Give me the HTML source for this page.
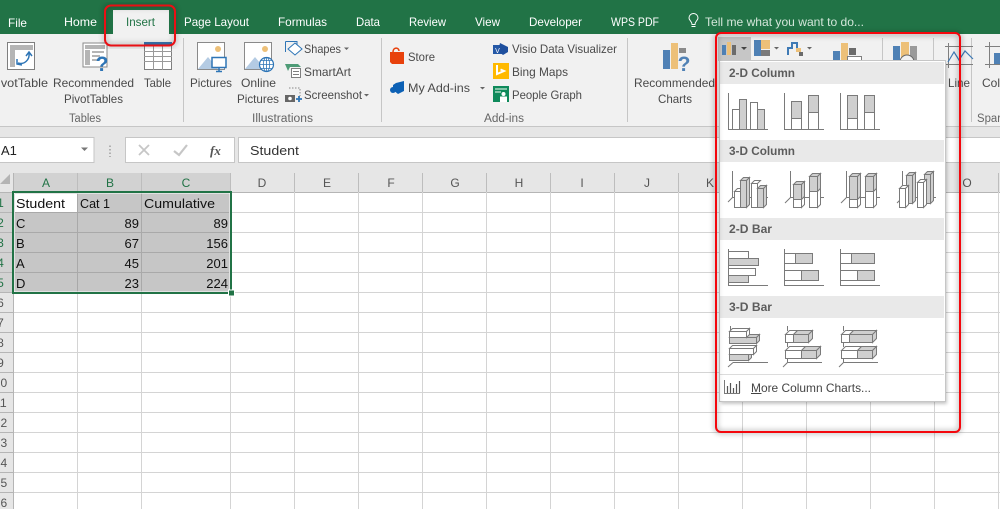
<!DOCTYPE html>
<html><head><meta charset="utf-8"><style>
html,body{margin:0;padding:0;background:#fff;width:1000px;height:509px;overflow:hidden}
svg{display:block;font-family:"Liberation Sans",sans-serif}
.t{font-size:12px;fill:#4a4a4a}
.gl{font-size:11.500px;fill:#666}
.w{font-size:12px;fill:#fff}
.c{font-size:13px;fill:#111}
.h{font-size:12px;fill:#555}
.g{font-size:12px;fill:#217346}
.s{font-size:12px;font-weight:bold;fill:#5c5c5c}
.i{fill:#fff;stroke:#7a7a7a;stroke-width:1}
.d{fill:#cfcfcf;stroke:#7a7a7a;stroke-width:1}
.l{fill:none;stroke:#7a7a7a;stroke-width:1}
</style></head><body>
<svg width="1000" height="509" viewBox="0 0 1000 509" xmlns="http://www.w3.org/2000/svg">
<defs>
<filter id="sh" x="-10%" y="-10%" width="120%" height="120%"><feGaussianBlur stdDeviation="3"/></filter>
<filter id="ps" x="-10%" y="-10%" width="120%" height="120%"><feGaussianBlur stdDeviation="1.500"/></filter>
</defs>
<rect width="1000" height="509" fill="#fff"/>

<!-- title and tabs -->
<rect width="1000" height="34" fill="#217346"/>
<rect x="0" y="34" width="1000" height="92" fill="#f1f1f1"/>
<rect x="113" y="10" width="56" height="24" fill="#f1f1f1"/>
<text x="8" y="27" class="w" textLength="19" lengthAdjust="spacingAndGlyphs">File</text>
<text x="64" y="26" class="w" textLength="33" lengthAdjust="spacingAndGlyphs">Home</text>
<text x="126" y="26" font-size="12" fill="#217346" textLength="29" lengthAdjust="spacingAndGlyphs">Insert</text>
<text x="184" y="26" class="w" textLength="65" lengthAdjust="spacingAndGlyphs">Page Layout</text>
<text x="278" y="26" class="w" textLength="49" lengthAdjust="spacingAndGlyphs">Formulas</text>
<text x="356" y="26" class="w" textLength="24" lengthAdjust="spacingAndGlyphs">Data</text>
<text x="409" y="26" class="w" textLength="37" lengthAdjust="spacingAndGlyphs">Review</text>
<text x="475" y="26" class="w" textLength="25" lengthAdjust="spacingAndGlyphs">View</text>
<text x="529" y="26" class="w" textLength="53" lengthAdjust="spacingAndGlyphs">Developer</text>
<text x="611" y="26" class="w" textLength="48" lengthAdjust="spacingAndGlyphs">WPS PDF</text>
<path d="M692 24.500C692 21 689 20.500 689 18A4.500 4.500 0 0 1 698 18C698 20.500 695 21 695 24.500ZM691.500 26.500H695.500" fill="none" stroke="#fff" stroke-width="1"/>
<text x="705" y="26" font-size="12" fill="#d3e6da" textLength="159" lengthAdjust="spacingAndGlyphs">Tell me what you want to do...</text>

<!-- ribbon dividers -->
<path d="M183.500 38V122M381.500 38V122M627.500 38V122M882.500 38V122M933.500 38V122M971.500 38V122" stroke="#c6c6c6" stroke-width="1"/>
<path d="M0 126.500H1000" stroke="#c6c6c6"/>

<!-- PivotTable -->
<rect x="7.500" y="42.500" width="27" height="27" fill="#fff" stroke="#7f7f7f"/>
<rect x="10" y="45" width="23" height="5" fill="#b5b5b5"/><rect x="10" y="50" width="5" height="17" fill="#b5b5b5"/>
<path d="M18 63C24 65 30 60 29 53M26 56L29 52L32 56M17 59L17 64L22 65" fill="none" stroke="#2e75b6" stroke-width="1.500"/>
<text x="-2" y="87" class="t" textLength="50" lengthAdjust="spacingAndGlyphs">ivotTable</text>
<!-- Recommended PivotTables -->
<rect x="83" y="43" width="24" height="24" fill="#fff" stroke="#8a8a8a"/>
<rect x="85" y="45" width="20" height="4" fill="#b5b5b5"/><rect x="85" y="50" width="5" height="15" fill="#b5b5b5"/><path d="M92 52H104M92 56H100M92 60H98" stroke="#b5b5b5" stroke-width="2"/>
<text x="102" y="71" font-size="21" font-weight="bold" fill="#2e75b6" text-anchor="middle">?</text>
<text x="53" y="87" class="t" textLength="81" lengthAdjust="spacingAndGlyphs">Recommended</text>
<text x="64" y="103" class="t" textLength="59" lengthAdjust="spacingAndGlyphs">PivotTables</text>
<!-- Table -->
<rect x="144.500" y="42.500" width="27" height="27" fill="#fff" stroke="#7f7f7f"/>
<rect x="144" y="42" width="28" height="4" fill="#3b75b0"/>
<path d="M144 51.500H172M144 56.500H172M144 61.500H172M153.500 46V70M162.500 46V70" stroke="#9a9a9a"/>
<text x="144" y="87" class="t" textLength="27" lengthAdjust="spacingAndGlyphs">Table</text>
<text x="69" y="122" class="gl" textLength="32" lengthAdjust="spacingAndGlyphs">Tables</text>
<!-- Pictures -->
<rect x="197.500" y="42.500" width="27" height="27" fill="#fff" stroke="#8a8a8a"/>
<circle cx="218" cy="49" r="3" fill="#edc078"/>
<path d="M198 69L208 57L218 69Z" fill="#b4cbe3"/>
<rect x="212" y="57.500" width="14" height="10" fill="#fff" stroke="#2e75b6" stroke-width="1.500"/><path d="M216 71.500H222M219 68V71" stroke="#2e75b6" stroke-width="1.500"/>
<text x="190" y="87" class="t" textLength="42" lengthAdjust="spacingAndGlyphs">Pictures</text>
<!-- Online Pictures -->
<rect x="244.500" y="42.500" width="27" height="27" fill="#fff" stroke="#8a8a8a"/>
<circle cx="265" cy="49" r="3" fill="#edc078"/>
<path d="M245 69L255 57L265 69Z" fill="#b4cbe3"/>
<circle cx="266.500" cy="64.500" r="7" fill="#fff" stroke="#2e75b6" stroke-width="1.200"/><path d="M259.500 64.500H273.500M266.500 57.500V71.500M261 60.500H272M261 68.500H272" stroke="#2e75b6" stroke-width=".8"/><ellipse cx="266.500" cy="64.500" rx="3.200" ry="7" fill="none" stroke="#2e75b6" stroke-width=".8"/>
<text x="241" y="87" class="t" textLength="35" lengthAdjust="spacingAndGlyphs">Online</text>
<text x="237" y="103" class="t" textLength="42" lengthAdjust="spacingAndGlyphs">Pictures</text>
<!-- Shapes etc -->
<path d="M285.500 41.500H297V45M285.500 41.500V52" fill="none" stroke="#2e75b6"/>
<path d="M295 43L302 49L295 55L288 49Z" fill="#fff" stroke="#2e75b6"/>
<text x="304" y="53" class="t" textLength="37" lengthAdjust="spacingAndGlyphs">Shapes</text><path d="M344 47.500H349L346.500 50Z" fill="#666"/>
<path d="M285 64H298L301 67H290L288 71Z" fill="#4e9b76"/>
<rect x="291.500" y="68.500" width="9" height="9" fill="#fff" stroke="#7f7f7f"/><path d="M293 71.500H299M293 74.500H299" stroke="#7f7f7f"/>
<text x="304" y="76" class="t" textLength="47" lengthAdjust="spacingAndGlyphs">SmartArt</text>
<path d="M289 88H300V96" fill="none" stroke="#888" stroke-dasharray="1.500 1.500"/>
<rect x="285" y="95" width="10" height="7" fill="#666"/><circle cx="290" cy="98.500" r="1.800" fill="#fff"/>
<path d="M299 96V102M296 99H302" stroke="#2e75b6" stroke-width="1.800"/>
<text x="304" y="99" class="t" textLength="58" lengthAdjust="spacingAndGlyphs">Screenshot</text><path d="M364 94H369L366.500 96.500Z" fill="#666"/>
<text x="252" y="122" class="gl" textLength="61" lengthAdjust="spacingAndGlyphs">Illustrations</text>

<!-- Add-ins -->
<path d="M390 52H404V64H392L390 62Z" fill="#e8410c"/><path d="M393 52C393 47 399 47 399 51" fill="none" stroke="#e8410c" stroke-width="1.500"/>
<text x="408" y="61" class="t" textLength="27" lengthAdjust="spacingAndGlyphs">Store</text>
<path d="M396 83L404 81V91L398 94L393 90V85Z" fill="#0d61b5"/><circle cx="393" cy="90" r="3" fill="#0d61b5"/>
<text x="408" y="92" class="t" textLength="62" lengthAdjust="spacingAndGlyphs">My Add-ins</text><path d="M480 87H485L482.500 89.500Z" fill="#666"/>
<rect x="493" y="45" width="9" height="9" fill="#2458a6"/><path d="M500 43L508 47V52L503 55L498 51Z" fill="#1e4f9e"/>
<text x="497.500" y="53" font-size="7" fill="#fff" text-anchor="middle">V</text>
<text x="512" y="53" class="t" textLength="105" lengthAdjust="spacingAndGlyphs">Visio Data Visualizer</text>
<rect x="493" y="63" width="16" height="16" fill="#ffb900"/><path d="M497 65V74L504 71L500.500 69.500" fill="none" stroke="#fff" stroke-width="2"/>
<text x="512" y="76" class="t" textLength="56" lengthAdjust="spacingAndGlyphs">Bing Maps</text>
<rect x="493" y="86" width="16" height="16" fill="#0f8a5b"/><path d="M495 89H507M495 92H501" stroke="#a9d8c2" stroke-width="1.500"/><circle cx="503.500" cy="94" r="2" fill="#fff"/><rect x="500" y="96.500" width="7" height="5.500" fill="#fff"/>
<text x="512" y="99" class="t" textLength="70" lengthAdjust="spacingAndGlyphs">People Graph</text>
<text x="484" y="122" class="gl" textLength="40" lengthAdjust="spacingAndGlyphs">Add-ins</text>

<!-- Recommended Charts -->
<rect x="663" y="50" width="7" height="19" fill="#5081b5"/><rect x="671" y="43" width="7" height="26" fill="#edc078"/><rect x="679" y="48" width="7" height="5" fill="#8a8a8a"/>
<text x="684" y="71" font-size="21" font-weight="bold" fill="#5081b5" text-anchor="middle">?</text>
<text x="634" y="87" class="t" textLength="81" lengthAdjust="spacingAndGlyphs">Recommended</text>
<text x="658" y="103" class="t" textLength="34" lengthAdjust="spacingAndGlyphs">Charts</text>

<!-- chart toolbar -->
<rect x="718" y="37" width="33" height="24" fill="#c6c6c6"/>
<rect x="722" y="45" width="4" height="10" fill="#4f81b5"/><rect x="727" y="42" width="4" height="13" fill="#edc078"/><rect x="732" y="45" width="4" height="10" fill="#6b6b6b"/>
<path d="M741 47H747L744 50Z" fill="#444"/>
<rect x="754" y="40" width="7" height="16" fill="#4f81b5"/><rect x="761" y="40" width="9" height="9" fill="#edc078"/><rect x="761" y="50" width="9" height="6" fill="#7a7a7a"/>
<path d="M774 47H779L776.500 49.500Z" fill="#666"/>
<path d="M788 55V48H792V43H797V49" fill="none" stroke="#3f7ab5" stroke-width="2"/><rect x="796" y="48" width="5" height="4" fill="#edc078"/><rect x="799" y="52" width="4" height="4" fill="#6b6b6b"/>
<path d="M807 47H812L809.500 49.500Z" fill="#666"/>
<rect x="833" y="51" width="7" height="10" fill="#4f81b5"/><rect x="841" y="43" width="7" height="18" fill="#edc078"/><rect x="849" y="48" width="7" height="7" fill="#6b6b6b"/>
<rect x="847.500" y="56.500" width="14" height="5" fill="#fff" stroke="#7f7f7f"/>
<rect x="893" y="46" width="7" height="14" fill="#4f81b5"/><rect x="901" y="42" width="8" height="18" fill="#edc078"/><rect x="910" y="46" width="7" height="14" fill="#9a9a9a"/>
<circle cx="907" cy="62" r="7" fill="#f1f1f1" stroke="#666"/>
<!-- Line / column sparkline icons -->
<path d="M945 46.500H973M945 64.500H973M948.500 43V68" stroke="#7f7f7f" fill="none"/>
<path d="M948 62L954 52L959 60L965 51L973 59" fill="none" stroke="#3f7ab5" stroke-width="1.200"/>
<path d="M989.500 42V68M985 46.500H1000M985 64.500H1000" stroke="#7f7f7f" fill="none"/><rect x="994" y="53" width="6" height="11" fill="#4f81b5"/>
<text x="948" y="87" class="t" textLength="22" lengthAdjust="spacingAndGlyphs">Line</text>
<text x="982" y="87" class="t" textLength="18" lengthAdjust="spacingAndGlyphs">Col</text>
<text x="977" y="122" class="gl" textLength="24" lengthAdjust="spacingAndGlyphs">Spar</text>

<!-- formula bar -->
<rect x="0" y="127" width="1000" height="46" fill="#e6e6e6"/>
<rect x="-1" y="137.500" width="95" height="25" fill="#fff" stroke="#c6c6c6"/>
<text x="1" y="155" font-size="13" fill="#222">A1</text>
<path d="M81 147.500H88L84.500 151Z" fill="#777"/>
<path d="M110 145.500V157" stroke="#b0b0b0" stroke-dasharray="1.500 2" stroke-width="2"/>
<rect x="125.500" y="137.500" width="109" height="25" fill="#fff" stroke="#c6c6c6"/>
<path d="M139 145L149 155M149 145L139 155" stroke="#c6c6c6" stroke-width="1.800"/>
<path d="M174 151L179 155L187 145" fill="none" stroke="#c6c6c6" stroke-width="2.200"/>
<text x="210" y="155" font-family="Liberation Serif" font-style="italic" font-size="13" fill="#555" font-weight="bold">fx</text>
<rect x="238.500" y="137.500" width="770" height="25" fill="#fff" stroke="#c6c6c6"/>
<text x="250" y="155" font-size="13" fill="#333" textLength="49" lengthAdjust="spacingAndGlyphs">Student</text>

<!-- headers -->
<rect x="0" y="173" width="1000" height="19" fill="#e6e6e6"/>
<rect x="0" y="192" width="13" height="317" fill="#e6e6e6"/>
<path d="M0 184L10 184L10 174Z" fill="#b4b4b4"/>
<rect x="14" y="173" width="217" height="19" fill="#d2d2d2"/>
<rect x="0" y="193" width="13" height="100" fill="#d2d2d2"/>
<path d="M13.500 173V509" stroke="#b5b5b5"/>
<path d="M0 192.500H1000" stroke="#b5b5b5"/>
<path d="M77.500 173V192M141.500 173V192M230.500 173V192M294.500 173V192M358.500 173V192M422.500 173V192M486.500 173V192M550.500 173V192M614.500 173V192M678.500 173V192M742.500 173V192M806.500 173V192M870.500 173V192M934.500 173V192M998.500 173V192" stroke="#bdbdbd"/>
<g text-anchor="middle" font-size="12">
<text x="46" y="187" class="g">A</text><text x="110" y="187" class="g">B</text><text x="186" y="187" class="g">C</text>
<text x="262" y="187" class="h">D</text><text x="327" y="187" class="h">E</text><text x="391" y="187" class="h">F</text><text x="455" y="187" class="h">G</text><text x="519" y="187" class="h">H</text><text x="582" y="187" class="h">I</text><text x="647" y="187" class="h">J</text><text x="710" y="187" class="h">K</text><text x="967" y="187" class="h">O</text>
<text x=".5" y="207" class="g">1</text><text x=".5" y="227" class="g">2</text><text x=".5" y="247" class="g">3</text><text x=".5" y="267" class="g">4</text><text x=".5" y="287" class="g">5</text>
<text x=".5" y="307" class="h">6</text><text x=".5" y="327" class="h">7</text><text x=".5" y="347" class="h">8</text><text x=".5" y="367" class="h">9</text><text x=".5" y="387" class="h">10</text><text x=".5" y="407" class="h">11</text><text x=".5" y="427" class="h">12</text><text x=".5" y="447" class="h">13</text><text x=".5" y="467" class="h">14</text><text x=".5" y="487" class="h">15</text><text x=".5" y="507" class="h">16</text>
</g>
<path d="M0 212.500H13M0 232.500H13M0 252.500H13M0 272.500H13M0 292.500H13M0 312.500H13M0 332.500H13M0 352.500H13M0 372.500H13M0 392.500H13M0 412.500H13M0 432.500H13M0 452.500H13M0 472.500H13M0 492.500H13" stroke="#b5b5b5"/>

<!-- grid -->
<path d="M14 212.500H1000M14 232.500H1000M14 252.500H1000M14 272.500H1000M14 292.500H1000M14 312.500H1000M14 332.500H1000M14 352.500H1000M14 372.500H1000M14 392.500H1000M14 412.500H1000M14 432.500H1000M14 452.500H1000M14 472.500H1000M14 492.500H1000M77.500 192V509M141.500 192V509M230.500 192V509M294.500 192V509M358.500 192V509M422.500 192V509M486.500 192V509M550.500 192V509M614.500 192V509M678.500 192V509M742.500 192V509M806.500 192V509M870.500 192V509M934.500 192V509M998.500 192V509" stroke="#d4d4d4"/>

<!-- selection -->
<rect x="14" y="193" width="216" height="99" fill="#c6c6c6"/>
<rect x="15" y="194" width="62" height="18" fill="#fff"/>
<path d="M15 212.500H229M15 232.500H229M15 252.500H229M15 272.500H229M77.500 193V292M141.500 193V292" stroke="#a9a9a9"/>
<rect x="14" y="193" width="216" height="99" fill="none" stroke="#fff"/>
<rect x="13" y="192" width="218" height="101" fill="none" stroke="#217346" stroke-width="2"/>
<rect x="228.500" y="290" width="6" height="6" fill="#217346" stroke="#fff" stroke-width="1"/>
<text x="16" y="208" class="c" textLength="49" lengthAdjust="spacingAndGlyphs">Student</text>
<text x="80" y="208" class="c" textLength="30" lengthAdjust="spacingAndGlyphs">Cat 1</text>
<text x="144" y="208" class="c" textLength="71" lengthAdjust="spacingAndGlyphs">Cumulative</text>
<text x="16" y="228" class="c">C</text><text x="16" y="248" class="c">B</text><text x="16" y="268" class="c">A</text><text x="16" y="288" class="c">D</text>
<g text-anchor="end">
<text x="139" y="228" class="c">89</text><text x="139" y="248" class="c">67</text><text x="139" y="268" class="c">45</text><text x="139" y="288" class="c">23</text>
<text x="228" y="228" class="c">89</text><text x="228" y="248" class="c">156</text><text x="228" y="268" class="c">201</text><text x="228" y="288" class="c">224</text>
</g>

<!-- dropdown panel -->
<rect x="721" y="63" width="226" height="341" fill="#000" opacity=".22" filter="url(#ps)"/>
<rect x="719.500" y="60.500" width="226" height="341" fill="#fff" stroke="#c6c6c6"/>
<rect x="720" y="62" width="224" height="22" fill="#e9e9e9"/>
<rect x="720" y="140" width="224" height="22" fill="#e9e9e9"/>
<rect x="720" y="218" width="224" height="22" fill="#e9e9e9"/>
<rect x="720" y="296" width="224" height="22" fill="#e9e9e9"/>
<text x="729" y="77" class="s" textLength="66" lengthAdjust="spacingAndGlyphs">2-D Column</text>
<text x="729" y="155" class="s" textLength="66" lengthAdjust="spacingAndGlyphs">3-D Column</text>
<text x="729" y="233" class="s" textLength="43" lengthAdjust="spacingAndGlyphs">2-D Bar</text>
<text x="729" y="311" class="s" textLength="43" lengthAdjust="spacingAndGlyphs">3-D Bar</text>

<!-- 2-D column icons -->
<rect class="i" x="732.500" y="109.500" width="7" height="20"/><rect class="d" x="739.500" y="99.500" width="7" height="30"/><rect class="i" x="750.500" y="102.500" width="7" height="27"/><rect class="d" x="757.500" y="109.500" width="7" height="20"/>
<path class="l" d="M728.500 93V129.500H768"/>
<rect class="d" x="791.500" y="101.500" width="10" height="17"/><rect class="i" x="791.500" y="118.500" width="10" height="11"/><rect class="d" x="808.500" y="95.500" width="10" height="17"/><rect class="i" x="808.500" y="112.500" width="10" height="17"/>
<path class="l" d="M784.500 93V129.500H824"/>
<rect class="d" x="847.500" y="95.500" width="10" height="23"/><rect class="i" x="847.500" y="118.500" width="10" height="11"/><rect class="d" x="864.500" y="95.500" width="10" height="17"/><rect class="i" x="864.500" y="112.500" width="10" height="17"/>
<path class="l" d="M840.500 93V129.500H880"/>

<!-- 3-D column icons -->
<path class="l" d="M732.500 171V197.500H768M728 202L732.500 197.500"/>
<path class="i" d="M734.500 191.500l3 -3h6l-3 3z"/><rect class="i" x="734.500" y="191.500" width="6" height="16"/>
<path class="d" d="M740.500 180.500l3 -3h6l-3 3z"/><path class="d" d="M746.500 180.500l3 -3v27l-3 3z"/><rect class="d" x="740.500" y="180.500" width="6" height="27"/>
<path class="i" d="M751.500 183.500l3 -3h6l-3 3z"/><rect class="i" x="751.500" y="183.500" width="6" height="24"/>
<path class="d" d="M757.500 188.500l3 -3h6l-3 3z"/><path class="d" d="M763.500 188.500l3 -3v19l-3 3z"/><rect class="d" x="757.500" y="188.500" width="6" height="19"/>

<path class="l" d="M790.500 171V197.500H824M785 203L790.500 197.500"/>
<path class="d" d="M793.500 184.500l3 -3h8l-3 3z"/><path class="d" d="M801.500 184.500l3 -3v15l-3 3z"/><rect class="d" x="793.500" y="184.500" width="8" height="15"/>
<path class="i" d="M801.500 199.500l3 -3v8l-3 3z"/><rect class="i" x="793.500" y="199.500" width="8" height="8"/>
<path class="d" d="M809.500 176.500l3 -3h8l-3 3z"/><path class="d" d="M817.500 176.500l3 -3v15l-3 3z"/><rect class="d" x="809.500" y="176.500" width="8" height="15"/>
<path class="i" d="M817.500 191.500l3 -3v16l-3 3z"/><rect class="i" x="809.500" y="191.500" width="8" height="16"/>

<path class="l" d="M846.500 171V197.500H880M841 203L846.500 197.500"/>
<path class="d" d="M849.500 176.500l3 -3h8l-3 3z"/><path class="d" d="M857.500 176.500l3 -3v23l-3 3z"/><rect class="d" x="849.500" y="176.500" width="8" height="23"/>
<path class="i" d="M857.500 199.500l3 -3v8l-3 3z"/><rect class="i" x="849.500" y="199.500" width="8" height="8"/>
<path class="d" d="M865.500 176.500l3 -3h8l-3 3z"/><path class="d" d="M873.500 176.500l3 -3v15l-3 3z"/><rect class="d" x="865.500" y="176.500" width="8" height="15"/>
<path class="i" d="M873.500 191.500l3 -3v16l-3 3z"/><rect class="i" x="865.500" y="191.500" width="8" height="16"/>

<path class="l" d="M902.500 171V197.500H936M897 203L902.500 197.500"/>
<path class="d" d="M906.500 175.500l3 -3h6l-3 3z"/><path class="d" d="M912.500 175.500l3 -3v28l-3 3z"/><rect class="d" x="906.500" y="175.500" width="6" height="28"/>
<path class="i" d="M899.500 188.500l3 -3h6l-3 3z"/><path class="i" d="M905.500 188.500l3 -3v19l-3 3z"/><rect class="i" x="899.500" y="188.500" width="6" height="19"/>
<path class="d" d="M924.500 174.500l3 -3h6l-3 3z"/><path class="d" d="M930.500 174.500l3 -3v29l-3 3z"/><rect class="d" x="924.500" y="174.500" width="6" height="29"/>
<path class="i" d="M917.500 182.500l3 -3h6l-3 3z"/><path class="i" d="M923.500 182.500l3 -3v25l-3 3z"/><rect class="i" x="917.500" y="182.500" width="6" height="25"/>

<!-- 2-D bar icons -->
<rect class="i" x="728.500" y="251.500" width="20" height="7"/><rect class="d" x="728.500" y="258.500" width="30" height="7"/><rect class="i" x="728.500" y="268.500" width="27" height="7"/><rect class="d" x="728.500" y="275.500" width="20" height="7"/>
<path class="l" d="M728.500 249V285.500H768"/>
<rect class="i" x="784.500" y="253.500" width="11" height="10"/><rect class="d" x="795.500" y="253.500" width="17" height="10"/><rect class="i" x="784.500" y="270.500" width="17" height="10"/><rect class="d" x="801.500" y="270.500" width="17" height="10"/>
<path class="l" d="M784.500 249V285.500H824"/>
<rect class="i" x="840.500" y="253.500" width="11" height="10"/><rect class="d" x="851.500" y="253.500" width="23" height="10"/><rect class="i" x="840.500" y="270.500" width="17" height="10"/><rect class="d" x="857.500" y="270.500" width="17" height="10"/>
<path class="l" d="M840.500 249V285.500H880"/>

<!-- 3-D bar icons -->
<path class="l" d="M730.500 326V330M733 362.500H768M728 367L733 362.500"/>
<path class="d" d="M729.500 337.500l3 -3h27l-3 3z"/><path class="d" d="M756.500 337.500l3 -3v6l-3 3z"/><rect class="d" x="729.500" y="337.500" width="27" height="6"/>
<path class="i" d="M729.500 331.500l3 -3h17l-3 3z"/><path class="i" d="M746.500 331.500l3 -3v6l-3 3z"/><rect class="i" x="729.500" y="331.500" width="17" height="6"/>
<path class="d" d="M729.500 354.500l3 -3h19l-3 3z"/><path class="d" d="M748.500 354.500l3 -3v6l-3 3z"/><rect class="d" x="729.500" y="354.500" width="19" height="6"/>
<path class="i" d="M729.500 348.500l3 -3h24l-3 3z"/><path class="i" d="M753.500 348.500l3 -3v6l-3 3z"/><rect class="i" x="729.500" y="348.500" width="24" height="6"/>

<path class="l" d="M787.500 326V331M787.500 343V347M787.500 359V362.500H822M783 367L787.500 362.500"/>
<path class="i" d="M785.500 334.500l4 -4h8l-4 4z"/><rect class="i" x="785.500" y="334.500" width="8" height="8"/>
<path class="d" d="M793.500 334.500l4 -4h15l-4 4z"/><path class="d" d="M808.500 334.500l4 -4v8l-4 4z"/><rect class="d" x="793.500" y="334.500" width="15" height="8"/>
<path class="i" d="M785.500 350.500l4 -4h16l-4 4z"/><rect class="i" x="785.500" y="350.500" width="16" height="8"/>
<path class="d" d="M801.500 350.500l4 -4h15l-4 4z"/><path class="d" d="M816.500 350.500l4 -4v8l-4 4z"/><rect class="d" x="801.500" y="350.500" width="15" height="8"/>

<path class="l" d="M843.500 326V331M843.500 343V347M843.500 359V362.500H878M839 367L843.500 362.500"/>
<path class="i" d="M841.500 334.500l4 -4h8l-4 4z"/><rect class="i" x="841.500" y="334.500" width="8" height="8"/>
<path class="d" d="M849.500 334.500l4 -4h23l-4 4z"/><path class="d" d="M872.500 334.500l4 -4v8l-4 4z"/><rect class="d" x="849.500" y="334.500" width="23" height="8"/>
<path class="i" d="M841.500 350.500l4 -4h16l-4 4z"/><rect class="i" x="841.500" y="350.500" width="16" height="8"/>
<path class="d" d="M857.500 350.500l4 -4h15l-4 4z"/><path class="d" d="M872.500 350.500l4 -4v8l-4 4z"/><rect class="d" x="857.500" y="350.500" width="15" height="8"/>

<!-- more -->
<path d="M720 374.500H944" stroke="#dcdcdc"/>
<path class="l" d="M724.500 380V393.500H740"/>
<path d="M727.500 386V393M730.500 383V393M733.500 388V393M736.500 384V393M739.500 381V393" stroke="#555" stroke-width="1.200"/>
<text x="751" y="392" font-size="12" fill="#444" textLength="120" lengthAdjust="spacingAndGlyphs">More Column Charts...</text>
<path d="M751 393.500H761.500" stroke="#444"/>

<!-- red annotation boxes -->
<rect x="716" y="34" width="244" height="398" rx="5" fill="none" stroke="#000" stroke-width="3" opacity=".35" filter="url(#sh)"/>
<rect x="105" y="6" width="70" height="39" rx="5" fill="none" stroke="#000" stroke-width="3" opacity=".3" filter="url(#sh)"/>
<rect x="105" y="5.500" width="70" height="40" rx="6" fill="none" stroke="#ea0f14" stroke-width="2"/>
<rect x="716" y="33" width="244" height="399" rx="5" fill="none" stroke="#f4070d" stroke-width="2"/>
</svg>
</body></html>
